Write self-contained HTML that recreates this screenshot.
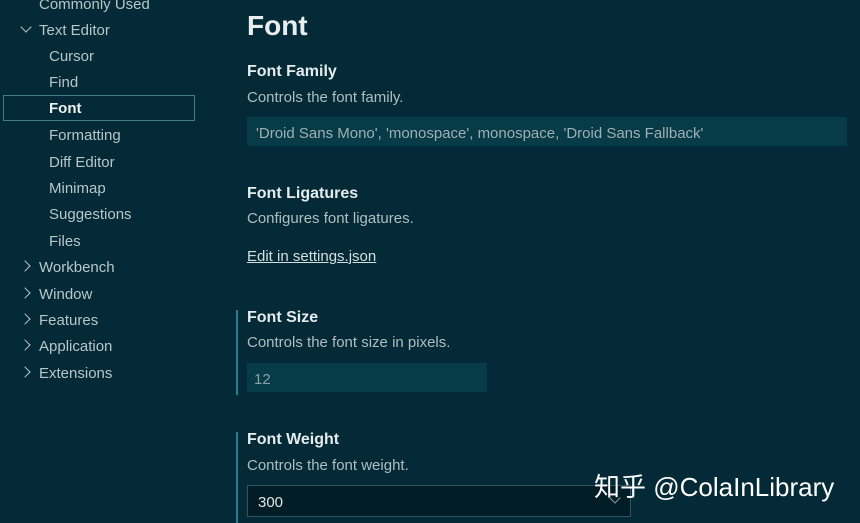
<!DOCTYPE html>
<html><head><style>
body{margin:0;width:860px;height:523px;overflow:hidden;background:#032a36;font-family:"Liberation Sans","DejaVu Sans",sans-serif;color:#c8d2d4;position:relative}
.t{position:absolute;white-space:nowrap}
.n{font-size:15px;color:#b9c6c9}
.chev{position:absolute;width:7px;height:7px;border-right:1.3px solid #b9c6c9;border-bottom:1.3px solid #b9c6c9}
h1{position:absolute;left:247px;top:10px;margin:0;font-size:28px;font-weight:bold;color:#e8eeee}
.h{font-size:16px;font-weight:bold;color:#e6ecec}
.d{font-size:15px;color:#b0bec2}
.bar{position:absolute;left:236px;width:2px;background:#2a7f93}
</style></head><body>
<div class="t n" style="left:39px;top:-4px">Commonly Used</div>
<div class="chev" style="left:22px;top:23px;transform:rotate(45deg)"></div>
<div class="t n" style="left:39px;top:22px">Text Editor</div>
<div class="t n" style="left:49px;top:48px">Cursor</div>
<div class="t n" style="left:49px;top:74px">Find</div>
<div style="position:absolute;left:3px;top:95px;width:190px;height:24px;border:1px solid #3f7c88"></div>
<div class="t n" style="left:49px;top:100px;font-weight:bold;color:#eef3f3">Font</div>
<div class="t n" style="left:49px;top:127px">Formatting</div>
<div class="t n" style="left:49px;top:154px">Diff Editor</div>
<div class="t n" style="left:49px;top:180px">Minimap</div>
<div class="t n" style="left:49px;top:206px">Suggestions</div>
<div class="t n" style="left:49px;top:233px">Files</div>
<div class="chev" style="left:21px;top:262px;transform:rotate(-45deg)"></div><div class="t n" style="left:39px;top:259px">Workbench</div>
<div class="chev" style="left:21px;top:289px;transform:rotate(-45deg)"></div><div class="t n" style="left:39px;top:286px">Window</div>
<div class="chev" style="left:21px;top:315px;transform:rotate(-45deg)"></div><div class="t n" style="left:39px;top:312px">Features</div>
<div class="chev" style="left:21px;top:341px;transform:rotate(-45deg)"></div><div class="t n" style="left:39px;top:338px">Application</div>
<div class="chev" style="left:21px;top:368px;transform:rotate(-45deg)"></div><div class="t n" style="left:39px;top:365px">Extensions</div>

<h1>Font</h1>
<div class="t h" style="left:247px;top:63px">Font Family</div>
<div class="t d" style="left:247px;top:89px">Controls the font family.</div>
<div style="position:absolute;left:247px;top:117px;width:600px;height:29px;background:#073b48"></div>
<div class="t d" style="left:256px;top:125px;color:#9fb0b4">'Droid Sans Mono', 'monospace', monospace, 'Droid Sans Fallback'</div>
<div class="t h" style="left:247px;top:185px">Font Ligatures</div>
<div class="t d" style="left:247px;top:210px">Configures font ligatures.</div>
<div class="t d" style="left:247px;top:248px;color:#d6dfe0;text-decoration:underline">Edit in settings.json</div>
<div class="bar" style="top:310px;height:85px"></div>
<div class="t h" style="left:247px;top:309px">Font Size</div>
<div class="t d" style="left:247px;top:334px">Controls the font size in pixels.</div>
<div style="position:absolute;left:247px;top:363px;width:240px;height:29px;background:#073b48"></div>
<div class="t d" style="left:254px;top:371px;color:#8aa0a5">12</div>
<div class="bar" style="top:432px;height:91px"></div>
<div class="t h" style="left:247px;top:431px">Font Weight</div>
<div class="t d" style="left:247px;top:457px">Controls the font weight.</div>
<div style="position:absolute;left:247px;top:485px;width:382px;height:30px;background:#031d26;border:1px solid #2b5560"></div>
<div class="t d" style="left:258px;top:494px;color:#e0e6e6">300</div>
<div class="chev" style="left:611px;top:494px;transform:rotate(45deg);border-color:#8aa0a5"></div>
<div class="t" style="left:594px;top:467px;font-size:26px;color:#fff;font-family:'Liberation Sans','Noto Sans CJK SC',sans-serif">知乎 @ColaInLibrary</div>
</body></html>
